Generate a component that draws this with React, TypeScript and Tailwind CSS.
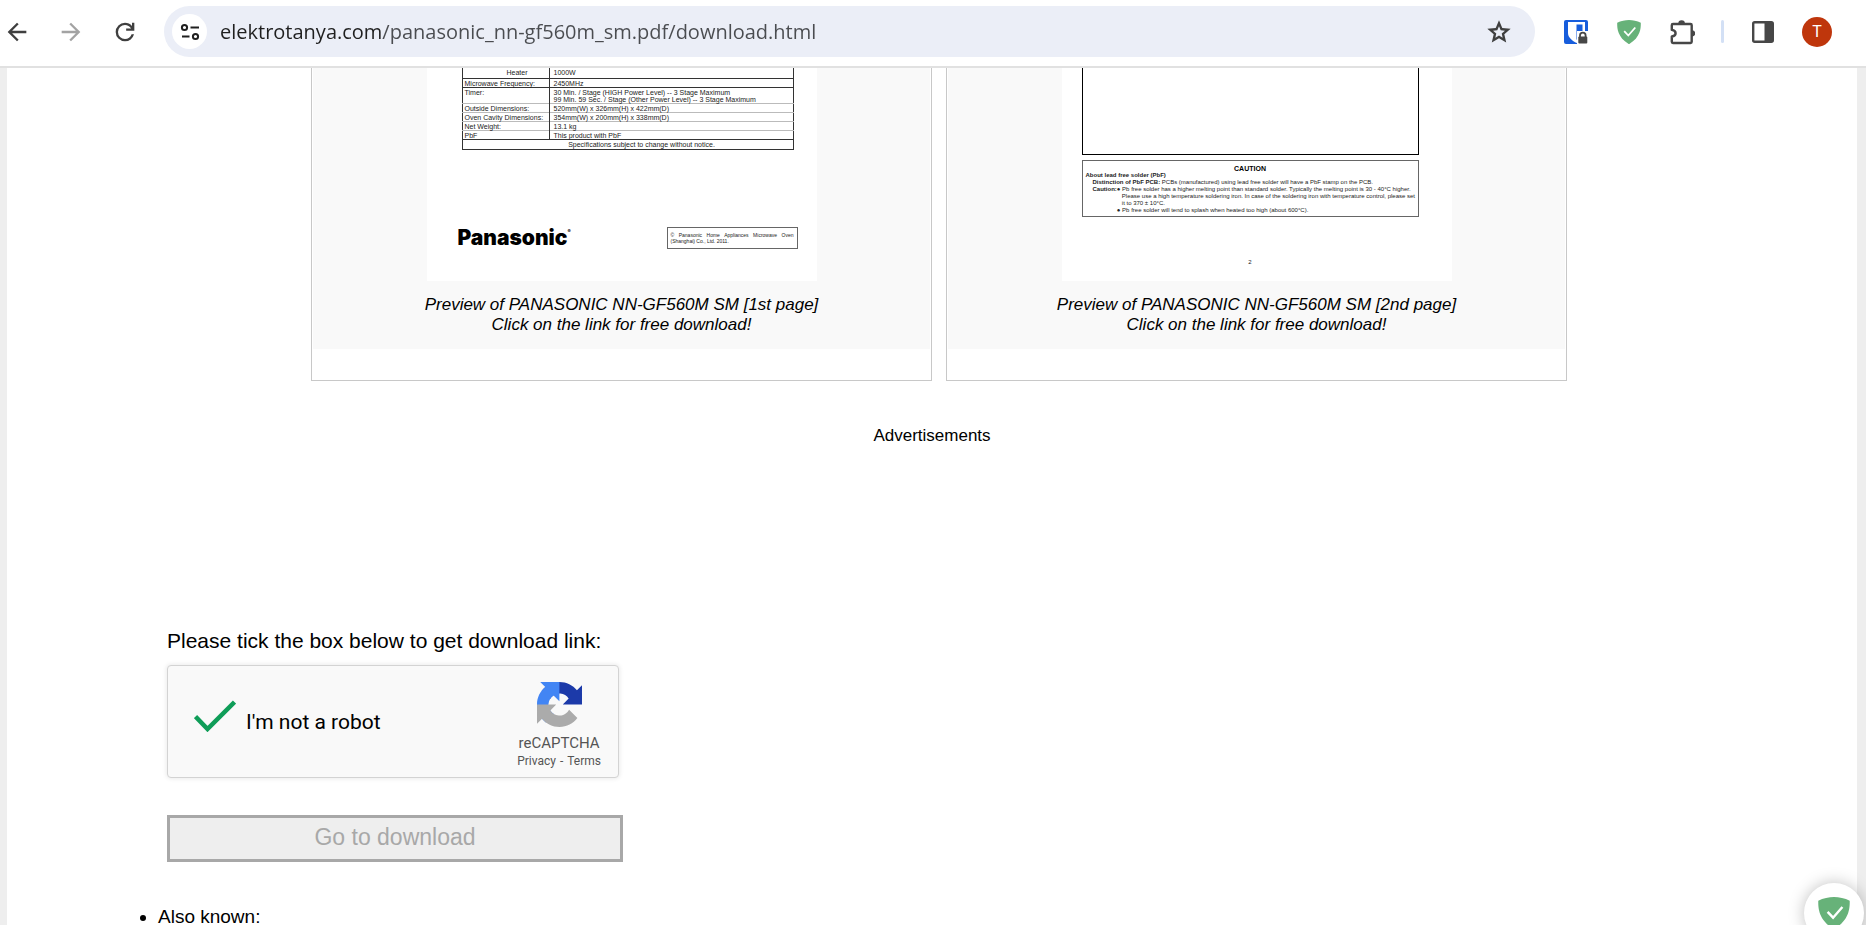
import { ReactNode } from "react";
import clsx from "clsx";

const specs = [
  { name: "Microwave Frequency:", value: ["2450MHz"], dark: true },
  {
    name: "Timer:",
    value: [
      "30 Min. / Stage (HIGH Power Level) -- 3 Stage Maximum",
      "99 Min. 59 Sec. / Stage (Other Power Level) -- 3 Stage Maximum",
    ],
  },
  { name: "Outside Dimensions:", value: ["520mm(W) x 326mm(H) x 422mm(D)"] },
  { name: "Oven Cavity Dimensions:", value: ["354mm(W) x 200mm(H) x 338mm(D)"] },
  { name: "Net Weight:", value: ["13.1 kg"] },
  { name: "PbF", value: ["This product with PbF"], dark: true },
];

const ShieldIcon = ({ className }: { className: string }) => (
  <svg viewBox="0 0 24 24" className={className} aria-hidden="true">
    <path
      d="M12 0C8.3 0 3.8.9.2 2.8.2 6.900-.3 17.100 12 24.200 24.300 17.100 23.800 6.900 23.800 2.800 20.200.9 15.700 0 12 0z"
      fill="#67b279"
    />
    <path
      d="M7.200 11.200l4.100 4.300 7-8"
      fill="none"
      stroke="#fff"
      strokeWidth="1.800"
    />
  </svg>
);

const NavButton = ({
  label,
  path,
  muted,
}: {
  label: string;
  path: string;
  muted?: boolean;
}) => (
  <button
    type="button"
    aria-label={label}
    className={clsx("shrink-0", muted ? "text-[#a3a3a3]" : "text-[#3f3f3f]")}
  >
    <svg viewBox="0 0 24 24" className="size-7" fill="currentColor">
      <path d={path} />
    </svg>
  </button>
);

const ToolButton = ({ label, children }: { label: string; children: ReactNode }) => (
  <button
    type="button"
    aria-label={label}
    className="size-7 shrink-0 flex items-center justify-center"
  >
    {children}
  </button>
);

const BrowserBar = () => (
  <header className="shrink-0 h-[68px] border-b-2 border-[#e1e1e1] bg-white flex items-center pb-[3px] pl-[3px] pr-[34px]">
    <div className="flex gap-[26px]">
      <NavButton
        label="Back"
        path="M20 11H7.830l5.590-5.590L12 4l-8 8 8 8 1.410-1.410L7.830 13H20v-2z"
      />
      <NavButton
        label="Forward"
        muted
        path="M4 13h12.170l-5.590 5.590L12 20l8-8-8-8-1.410 1.410L16.170 11H4v2z"
      />
      <NavButton
        label="Reload"
        path="M12 20q-3.350 0-5.675-2.325Q4 15.350 4 12q0-3.350 2.325-5.675Q8.650 4 12 4q1.725 0 3.300.713 1.575.712 2.700 2.037V4h2v7h-7V9h4.200q-.8-1.400-2.187-2.200Q13.625 6 12 6 9.500 6 7.750 7.750T6 12q0 2.500 1.750 4.250T12 18q1.925 0 3.475-1.100T17.650 14h2.100q-.7 2.650-2.850 4.325Q14.750 20 12 20z"
      />
    </div>
    <div className="flex-1 h-[51px] ml-[25px] mr-[27px] pl-2 pr-[22px] rounded-full bg-[#ebeef7] flex items-center">
      <button
        type="button"
        aria-label="View site information"
        className="size-[35px] shrink-0 rounded-full bg-white flex items-center justify-center"
      >
        <svg
          viewBox="0 0 20 18"
          className="w-5 h-[18px]"
          fill="none"
          stroke="#1f1f1f"
          strokeWidth="2"
        >
          <circle cx="4.500" cy="4.500" r="2.600" />
          <path d="M10.500 4.500H19M2 13.500h7.500" />
          <circle cx="15.500" cy="13.500" r="2.600" />
        </svg>
      </button>
      <input
        type="text"
        aria-label="Address"
        defaultValue="elektrotanya.com/panasonic_nn-gf560m_sm.pdf/download.html"
        className="flex-1 min-w-0 ml-[13px] outline-none font-['Open_Sans',sans-serif] text-[20px] leading-7 text-transparent bg-clip-text bg-[linear-gradient(90deg,#1f1f1f_161px,#4a4c50_161px)]"
      />
      <button type="button" aria-label="Bookmark" className="shrink-0 text-[#3f3f3f]">
        <svg viewBox="0 0 24 24" className="size-7" fill="currentColor">
          <path d="m8.850 16.825 3.150-1.900 3.150 1.925-.825-3.600 2.775-2.400-3.650-.325-1.450-3.400-1.450 3.375-3.650.325 2.775 2.425ZM5.825 21l1.625-7.025L2 9.250l7.200-.625L12 2l2.800 6.625 7.200.625-5.450 4.725L18.175 21 12 17.275Z" />
        </svg>
      </button>
    </div>
    <div className="flex items-center gap-[25px]">
      <ToolButton label="Bitwarden">
        <svg viewBox="0 0 26 26" className="size-[26px]">
          <rect x="1" y="1" width="24" height="24" rx="2" fill="#175ddc" />
          <path
            d="M5 3h17v11c0 4-3.500 7.500-8.500 10C8.500 21.500 5 18 5 14z"
            fill="#fff"
          />
          <path d="M13.500 5.500H19.500V14c0 2.500-3 5-6 6.800z" fill="#175ddc" />
          <path d="M14 12h12v14H14z" fill="#fff" />
          <path
            d="M17 18v-1.500a2.800 2.800 0 0 1 5.600 0V18"
            fill="none"
            stroke="#474747"
            strokeWidth="1.800"
          />
          <rect x="15.300" y="17.500" width="9" height="7" rx="1" fill="#474747" />
        </svg>
      </ToolButton>
      <ToolButton label="AdGuard">
        <ShieldIcon className="size-6" />
      </ToolButton>
      <ToolButton label="Extensions">
        <svg viewBox="0 0 26 26" className="size-[26px]" fill="none">
          <path
            d="M4 5h17.500q1.200 0 1.200 1.200v16.600q0 1.200-1.200 1.200H4q-1.200 0-1.200-1.200v-5.300c3.200-.5 3.800-2 3.800-3.300s-.6-2.800-3.800-3.300V6.200Q2.800 5 4 5z"
            stroke="#474747"
            strokeWidth="2.400"
            strokeLinejoin="round"
          />
          <path
            d="M9.300 4.500a3.300 3.300 0 0 1 6.600 0zM23 11.200a3.200 3.200 0 0 1 0 6.400z"
            fill="#474747"
          />
        </svg>
      </ToolButton>
      <span className="w-[3px] h-[23px] rounded-full bg-[#d3e0f5]" />
      <ToolButton label="Side panel">
        <svg viewBox="0 0 24 24" className="size-6">
          <rect
            x="2.200"
            y="2.200"
            width="19.600"
            height="19.600"
            rx="1.500"
            fill="none"
            stroke="#474747"
            strokeWidth="2.400"
          />
          <path d="M13.500 2h8v20h-8z" fill="#474747" />
        </svg>
      </ToolButton>
      <button
        type="button"
        aria-label="Profile"
        className="size-[30px] shrink-0 rounded-full bg-[#bf360c] text-white font-[Roboto,sans-serif] text-base flex items-center justify-center"
      >
        T
      </button>
    </div>
  </header>
);

const PreviewCard = ({ page, children }: { page: string; children: ReactNode }) => (
  <div className="flex-1 border border-t-0 border-[#c8c8c8] px-px pb-[31px]">
    <figure className="bg-[#f9f9f9] pb-[14px]">
      <div className="w-[390px] h-[213px] mx-auto bg-white overflow-hidden">
        {children}
      </div>
      <figcaption className="mt-[14px] text-center italic text-[17px] leading-5">
        Preview of PANASONIC NN-GF560M SM [{page} page]
        <br />
        Click on the link for free download!
      </figcaption>
    </figure>
  </div>
);

const FirstPage = () => (
  <div className="pl-[35px] pr-[19px] text-[7px] leading-[7px] text-[#222]">
    <table className="w-[332px] border-collapse border border-t-0 border-[#333]">
      <tbody>
        <tr className="h-[10px] border-b border-[#333]">
          <th className="w-[87px] border-r border-[#333] font-normal pl-11 text-left">
            Heater
          </th>
          <td className="pl-1">1000W</td>
        </tr>
        {specs.map(({ name, value, dark }) => (
          <tr
            key={name}
            className={clsx("h-[9px] border-b align-top", {
              "border-[#333]": dark,
              "border-[#bbb]": !dark,
            })}
          >
            <th className="border-r border-[#333] font-normal text-left pl-0.5 pt-px">
              {name}
            </th>
            <td className="pl-1 pt-px">
              {value.map((line) => (
                <p key={line}>{line}</p>
              ))}
            </td>
          </tr>
        ))}
        <tr className="h-[10px]">
          <td colSpan={2} className="pl-7 text-center">
            Specifications subject to change without notice.
          </td>
        </tr>
      </tbody>
    </table>
    <div className="mt-[76px] -ml-1 flex items-center justify-between">
      <p className="font-[Inter,sans-serif] font-black text-[21px] leading-6 text-black flex items-start">
        Panasonic
        <span className="text-[5px] leading-[10px]">®</span>
      </p>
      <p className="w-[131px] h-[22px] border border-[#666] px-[3px] py-1 text-[5px] leading-[6px] text-justify">
        © Panasonic Home Appliances Microwave Oven (Shanghai) Co., Ltd. 2011.
      </p>
    </div>
  </div>
);

const SecondPage = () => (
  <div className="pl-5 pr-[33px] text-[6px] leading-[7px] text-[#222]">
    <div className="h-[87px] border border-t-0 border-black" />
    <div className="mt-[5px] h-[57px] border border-[#666] px-[3px] pt-1">
      <h2 className="text-center font-bold text-[7px] leading-[7px] text-black">
        CAUTION
      </h2>
      <p className="font-bold">About lead free solder (PbF)</p>
      <p className="pl-[7px] whitespace-nowrap">
        <b>Distinction of PbF PCB:</b> PCBs (manufactured) using lead free solder will
        have a PbF stamp on the PCB.
      </p>
      <div className="pl-[7px] flex whitespace-nowrap">
        <b className="w-[26px]">Caution:</b>
        <ul>
          <li>
            ● Pb free solder has a higher melting point than standard solder. Typically
            the melting point is 30 - 40°C higher.
          </li>
          <li className="pl-[5px]">
            Please use a high temperature soldering iron. In case of the soldering iron
            with temperature control, please set
            <br />
            it to 370 ± 10°C.
          </li>
          <li>● Pb free solder will tend to splash when heated too high (about 600°C).</li>
        </ul>
      </div>
    </div>
    <p className="mt-[42px] text-center">2</p>
  </div>
);

const Captcha = () => (
  <div className="w-[452px] h-[113px] rounded border border-[#d3d3d3] bg-[#f9f9f9] shadow-[0_0_4px_1px_rgba(0,0,0,0.08)] font-[Roboto,sans-serif] flex items-center justify-between pl-[26px] pr-[17px]">
    <label className="flex items-center gap-[10px] text-[21px] leading-6 text-black">
      <span className="relative w-[42px] h-8 mb-3">
        <input
          type="checkbox"
          defaultChecked
          className="absolute inset-0 size-full appearance-none"
        />
        <svg viewBox="0 0 42 32" className="w-[42px] h-8 pointer-events-none">
          <path
            d="M1.500 16.500l12 12.500L40.500 2"
            fill="none"
            stroke="#0f9d58"
            strokeWidth="4.500"
          />
        </svg>
      </span>
      I'm not a robot
    </label>
    <div className="pt-2 flex flex-col items-center text-[#555]">
      <svg viewBox="0 0 64 64" className="size-[45px]" aria-hidden="true">
        <path
          d="M64 31.955l-.033-1.370V4.687l-7.160 7.160C50.948 4.674 42.033.093 32.050.093c-10.400 0-19.622 4.960-25.458 12.640l11.736 11.860a15.550 15.550 0 0 1 4.754-5.334c2.050-1.600 4.952-2.906 8.968-2.906.485 0 .86.057 1.135.163 4.976.393 9.288 3.140 11.828 7.124l-8.307 8.307L64 31.953"
          fill="#1c3aa9"
        />
        <path
          d="M31.862.094l-1.370.033H4.594l7.160 7.160C4.580 13.147 0 22.060 0 32.046c0 10.400 4.960 19.622 12.640 25.458L24.500 45.768a15.550 15.550 0 0 1-5.334-4.754c-1.600-2.050-2.906-4.952-2.906-8.968 0-.485.057-.86.163-1.135.393-4.976 3.140-9.288 7.124-11.828l8.307 8.307L31.860.095"
          fill="#4285f4"
        />
        <path
          d="M.001 32.045l.033 1.370v25.898l7.160-7.160c5.860 7.173 14.774 11.754 24.760 11.754 10.400 0 19.622-4.960 25.458-12.640l-11.736-11.860a15.550 15.550 0 0 1-4.754 5.334c-2.050 1.600-4.952 2.906-8.968 2.906-.485 0-.86-.057-1.135-.163-4.976-.393-9.288-3.140-11.828-7.124l8.307-8.307c-10.522.040-22.400.066-27.295-.005"
          fill="#ababab"
        />
      </svg>
      <p className="mt-[6px] text-[15px] leading-5">reCAPTCHA</p>
      <p className="text-[12px] leading-4 flex gap-1">
        <a href="#privacy">Privacy</a>
        <span>-</span>
        <a href="#terms">Terms</a>
      </p>
    </div>
  </div>
);

const App = () => {
  return (
    <div className="h-screen flex flex-col overflow-hidden font-['Liberation_Sans',Arial,sans-serif] text-black">
      <BrowserBar />
      <div className="flex-1 min-h-0 overflow-hidden bg-[#eee] pl-[7px] pr-[9px]">
        <main className="bg-white min-h-full">
          <section className="ml-[304px] mr-[290px] flex gap-[14px]">
            <PreviewCard page="1st">
              <FirstPage />
            </PreviewCard>
            <PreviewCard page="2nd">
              <SecondPage />
            </PreviewCard>
          </section>
          <p className="mt-[45px] text-center text-[17px] leading-5">Advertisements</p>
          <form className="mt-[183px] ml-40 w-[456px]">
            <p className="text-[21px] leading-6 whitespace-nowrap">
              Please tick the box below to get download link:
            </p>
            <div className="mt-3">
              <Captcha />
            </div>
            <button
              type="button"
              disabled
              className="mt-[37px] w-full h-[47px] border-[3px] border-[#a8a8a8] bg-[#eee] text-[#a8a8a8] text-[23px] leading-6 pb-1"
            >
              Go to download
            </button>
          </form>
          <ul className="mt-[45px] ml-[151px] list-disc text-[19px] leading-5">
            <li>Also known:</li>
          </ul>
        </main>
      </div>
      <button
        type="button"
        aria-label="AdGuard assistant"
        className="fixed right-0.5 -bottom-[18px] size-[60px] rounded-full bg-white shadow-[0_0_16px_rgba(0,0,0,0.25)] flex items-center justify-center"
      >
        <ShieldIcon className="size-8" />
      </button>
    </div>
  );
};

export default App;
